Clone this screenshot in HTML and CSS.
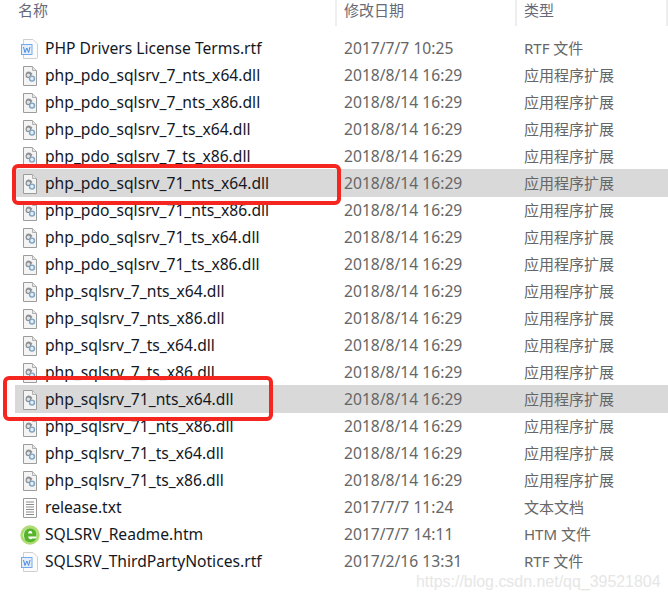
FILE: index.html
```html
<!DOCTYPE html>
<html lang="zh-CN">
<head>
    <meta charset="UTF-8">
    <title>SQLSRV</title>
    <link rel="stylesheet" href="styles.css">
</head>
<body>
    <svg class="defs" width="0" height="0">
        <symbol id="dll" viewBox="0 0 16 20">
            <path d="M1.5 .5H10.5L14.5 4.5V19.5H1.5Z" fill="#f4f4f4" stroke="#9c9c9c"/>
            <path d="M10.5 .5V4.5H14.5" fill="#e6e6e6" stroke="#b0b0b0"/>
            <path d="M4.6 8.4A2.2 2.2 0 0 1 8 6.6L10 8.4" fill="none" stroke="#8d8f92" stroke-width="1.5"/>
            <circle cx="6.4" cy="9.2" r="2.3" fill="#dfe3e6" stroke="#8d8f92" stroke-width="1.2"/>
            <circle cx="10" cy="12.6" r="2.5" fill="#e3edf5" stroke="#7fa3c2" stroke-width="1.4"/>
        </symbol>
        <symbol id="txt" viewBox="0 0 16 20">
            <path d="M1.5 .5H14.5V19.5H1.5Z" fill="#fdfdfd" stroke="#9a9a9a"/>
            <path d="M4 4H12M4 6.5H12M4 9H12M4 11.5H12M4 14H12M4 16.5H12" stroke="#8c8c8c"/>
        </symbol>
        <symbol id="rtf" viewBox="0 0 18 20">
            <path d="M2.5 .5H12L16.5 5V18.5Q16.5 19.5 15.5 19.5H2.5Z" fill="#fbfbfb" stroke="#cfcfcf"/>
            <rect x=".5" y="5.5" width="10.5" height="10" fill="#e4eefb" stroke="#76a9ea"/>
            <path d="M2.5 8L4 13.5L5.8 9L7.6 13.5L9 8" fill="none" stroke="#4a8ce0"/>
        </symbol>
        <symbol id="ie" viewBox="0 0 20 20">
            <circle cx="10" cy="10" r="8.2" fill="white" stroke="#aedb72" stroke-width="3"/>
            <path d="M4 11.4H16.4V9.4A6.2 6.2 0 0 0 4 9.4ZM8 8.6Q8.4 5.8 10.2 5.8Q12.2 5.8 12.5 8.6Z" fill="#55b52a" fill-rule="evenodd"/>
            <path d="M4 11Q4.4 17.2 10.2 17.2Q14.4 17.2 16.2 13.4H12.3Q11.4 14.4 10.2 14.2Q8.2 14 8 11Z" fill="#55b52a"/>
        </symbol>
    </svg>

    <div class="listing">
        <div class="head">
            <div class="col-name">名称</div>
            <div class="col-date">修改日期</div>
            <div class="col-type">类型</div>
        </div>

        <div class="row"><svg class="icon wide"><use href="#rtf"/></svg><div class="col-name">PHP Drivers License Terms.rtf</div><div class="col-date">2017/7/7 10:25</div><div class="col-type">RTF 文件</div></div>
        <div class="row"><svg class="icon"><use href="#dll"/></svg><div class="col-name">php_pdo_sqlsrv_7_nts_x64.dll</div><div class="col-date">2018/8/14 16:29</div><div class="col-type">应用程序扩展</div></div>
        <div class="row"><svg class="icon"><use href="#dll"/></svg><div class="col-name">php_pdo_sqlsrv_7_nts_x86.dll</div><div class="col-date">2018/8/14 16:29</div><div class="col-type">应用程序扩展</div></div>
        <div class="row"><svg class="icon"><use href="#dll"/></svg><div class="col-name">php_pdo_sqlsrv_7_ts_x64.dll</div><div class="col-date">2018/8/14 16:29</div><div class="col-type">应用程序扩展</div></div>
        <div class="row"><svg class="icon"><use href="#dll"/></svg><div class="col-name">php_pdo_sqlsrv_7_ts_x86.dll</div><div class="col-date">2018/8/14 16:29</div><div class="col-type">应用程序扩展</div></div>
        <div class="row selected"><svg class="icon"><use href="#dll"/></svg><div class="col-name">php_pdo_sqlsrv_71_nts_x64.dll</div><div class="col-date">2018/8/14 16:29</div><div class="col-type">应用程序扩展</div></div>
        <div class="row"><svg class="icon"><use href="#dll"/></svg><div class="col-name">php_pdo_sqlsrv_71_nts_x86.dll</div><div class="col-date">2018/8/14 16:29</div><div class="col-type">应用程序扩展</div></div>
        <div class="row"><svg class="icon"><use href="#dll"/></svg><div class="col-name">php_pdo_sqlsrv_71_ts_x64.dll</div><div class="col-date">2018/8/14 16:29</div><div class="col-type">应用程序扩展</div></div>
        <div class="row"><svg class="icon"><use href="#dll"/></svg><div class="col-name">php_pdo_sqlsrv_71_ts_x86.dll</div><div class="col-date">2018/8/14 16:29</div><div class="col-type">应用程序扩展</div></div>
        <div class="row"><svg class="icon"><use href="#dll"/></svg><div class="col-name">php_sqlsrv_7_nts_x64.dll</div><div class="col-date">2018/8/14 16:29</div><div class="col-type">应用程序扩展</div></div>
        <div class="row"><svg class="icon"><use href="#dll"/></svg><div class="col-name">php_sqlsrv_7_nts_x86.dll</div><div class="col-date">2018/8/14 16:29</div><div class="col-type">应用程序扩展</div></div>
        <div class="row"><svg class="icon"><use href="#dll"/></svg><div class="col-name">php_sqlsrv_7_ts_x64.dll</div><div class="col-date">2018/8/14 16:29</div><div class="col-type">应用程序扩展</div></div>
        <div class="row"><svg class="icon"><use href="#dll"/></svg><div class="col-name">php_sqlsrv_7_ts_x86.dll</div><div class="col-date">2018/8/14 16:29</div><div class="col-type">应用程序扩展</div></div>
        <div class="row selected"><svg class="icon"><use href="#dll"/></svg><div class="col-name">php_sqlsrv_71_nts_x64.dll</div><div class="col-date">2018/8/14 16:29</div><div class="col-type">应用程序扩展</div></div>
        <div class="row"><svg class="icon"><use href="#dll"/></svg><div class="col-name">php_sqlsrv_71_nts_x86.dll</div><div class="col-date">2018/8/14 16:29</div><div class="col-type">应用程序扩展</div></div>
        <div class="row"><svg class="icon"><use href="#dll"/></svg><div class="col-name">php_sqlsrv_71_ts_x64.dll</div><div class="col-date">2018/8/14 16:29</div><div class="col-type">应用程序扩展</div></div>
        <div class="row"><svg class="icon"><use href="#dll"/></svg><div class="col-name">php_sqlsrv_71_ts_x86.dll</div><div class="col-date">2018/8/14 16:29</div><div class="col-type">应用程序扩展</div></div>
        <div class="row"><svg class="icon"><use href="#txt"/></svg><div class="col-name">release.txt</div><div class="col-date">2017/7/7 11:24</div><div class="col-type">文本文档</div></div>
        <div class="row"><svg class="icon wide ie"><use href="#ie"/></svg><div class="col-name">SQLSRV_Readme.htm</div><div class="col-date">2017/7/7 14:11</div><div class="col-type">HTM 文件</div></div>
        <div class="row"><svg class="icon wide"><use href="#rtf"/></svg><div class="col-name">SQLSRV_ThirdPartyNotices.rtf</div><div class="col-date">2017/2/16 13:31</div><div class="col-type">RTF 文件</div></div>
    </div>

    <!-- hand-drawn marks over the list -->
    <div class="mark mark-first"></div>
    <div class="mark mark-second"></div>
    <div class="watermark">https://blog.csdn.net/qq_39521804</div>
</body>
</html>
```

FILE: styles.css
```css
body {
    margin: 0;
    width: 668px;
    height: 600px;
    overflow: hidden;
    position: relative;
    background: white;
    font-family: "Noto Sans", "Noto Sans CJK SC", sans-serif;
    font-size: 15px;
    color: #14181f;
}

.defs {
    position: absolute;
}

.listing {
    padding-left: 15px;
}

.head {
    display: flex;
    height: 26px;
    margin-bottom: 9px;
    line-height: 21px;
    color: #666a78;
}

.head .col-name {
    width: 322px;
    padding-left: 3px;
    box-sizing: border-box;
    border-right: 2px solid #eeeeee;
}

.head .col-date {
    width: 180px;
    padding-left: 7px;
    box-sizing: border-box;
    border-right: 2px solid #eeeeee;
}

.head .col-type {
    flex: 1;
    padding-left: 7px;
    border-right: 2px solid #eeeeee;
}

.row {
    display: flex;
    align-items: center;
    height: 27px;
    line-height: 27px;
    white-space: nowrap;
}

.row.selected {
    background: #d9d9d9;
    box-shadow: 0 -1px 0 #d9d9d9;
}

.icon {
    width: 16px;
    height: 20px;
    margin-left: 7px;
    margin-right: 7px;
    flex: none;
}

.icon.wide {
    width: 18px;
    height: 20px;
    margin-left: 6px;
    margin-right: 6px;
}

.icon.ie {
    width: 20px;
    margin-left: 5px;
    margin-right: 5px;
}

.row .col-name {
    width: 299px;
    font-size: 15.65px;
}

.row .col-date {
    width: 180px;
    font-size: 15.65px;
    color: #666666;
}

.row .col-type {
    flex: 1;
    color: #666666;
}

.mark {
    position: absolute;
    border: 4px solid #f5261f;
    border-radius: 6px;
    box-sizing: border-box;
}

.mark-first {
    left: 12px;
    top: 164px;
    width: 329px;
    height: 41px;
}

.mark-second {
    left: 3px;
    top: 376px;
    width: 270px;
    height: 45px;
}

.watermark {
    position: absolute;
    left: 416px;
    top: 573px;
    font-family: "Liberation Sans", sans-serif;
    font-size: 15.95px;
    color: #e6e6e6;
    white-space: nowrap;
}
```
